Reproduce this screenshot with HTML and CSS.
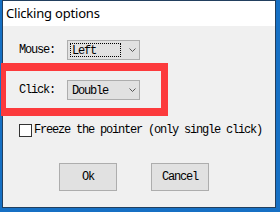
FILE: index.html
```html
<!DOCTYPE html>
<html>
<head>
<meta charset="utf-8">
<link rel="stylesheet" href="styles.css">
</head>
<body>
<div class="window">
  <div class="titlebar">Clicking options</div>
  <div class="client">
    <div class="row row-mouse">
      <span class="label">Mouse:</span>
      <div class="combo">
        <span class="value focus">Left</span>
        <svg class="chev" width="7" height="4" viewBox="0 0 7 4"><path d="M0.5 0.5 L3.5 3.5 L6.5 0.5" fill="none" stroke="#555" stroke-width="1"/></svg>
      </div>
    </div>
    <div class="row row-click">
      <span class="label">Click:</span>
      <div class="combo">
        <span class="value">Double</span>
        <svg class="chev" width="7" height="4" viewBox="0 0 7 4"><path d="M0.5 0.5 L3.5 3.5 L6.5 0.5" fill="none" stroke="#555" stroke-width="1"/></svg>
      </div>
    </div>
    <label class="check-row">
      <span class="checkbox"></span>
      <span class="check-text">Freeze the pointer (only single click)</span>
    </label>
    <div class="buttons">
      <div class="btn">Ok</div>
      <div class="btn">Cancel</div>
    </div>
  </div>
  <div class="highlight"></div>
</div>
</body>
</html>
```
FILE: styles.css
```css
html, body {
  margin: 0;
  padding: 0;
}
body {
  width: 280px;
  height: 212px;
  background: #1670c4;
  overflow: hidden;
}
.window {
  position: relative;
  margin-left: 2px;
  width: 274px;
  height: 208px;
  box-sizing: border-box;
  border: 1px solid #223f5e;
  display: flex;
  flex-direction: column;
}
.titlebar {
  height: 25px;
  flex: none;
  background: #ffffff;
  padding-left: 3px;
  font-family: "Noto Sans", "Liberation Sans", sans-serif;
  font-size: 13px;
  letter-spacing: -0.2px;
  line-height: 25px;
  color: #000;
}
.client {
  flex: 1;
  background: #f0f0f0;
  padding: 14px 0 0 16px;
  font-family: "Liberation Mono", monospace;
  font-size: 12px;
  letter-spacing: -1.2px;
  color: #000;
}
.row {
  display: flex;
  align-items: center;
  height: 20px;
}
.row-click {
  margin-top: 20px;
}
.label {
  width: 48px;
  flex: none;
}
.combo {
  position: relative;
  width: 73px;
  height: 20px;
  box-sizing: border-box;
  border: 1px solid #adadad;
  background: #e1e1e1;
  display: flex;
  align-items: center;
  padding-left: 2px;
}
.value {
  display: block;
  width: 51px;
  height: 14px;
  box-sizing: border-box;
  padding-left: 1px;
  line-height: 14px;
  border: 1px solid transparent;
}
.value.focus {
  border: 1px dotted #000;
}
.chev {
  margin-left: 8px;
}
.check-row {
  display: flex;
  align-items: center;
  margin-top: 24px;
  height: 13px;
}
.checkbox {
  width: 13px;
  height: 13px;
  box-sizing: border-box;
  border: 1px solid #333;
  background: #fff;
  flex: none;
}
.check-text {
  margin-left: 2px;
  line-height: 13px;
}
.buttons {
  display: flex;
  gap: 34px;
  margin-top: 26px;
  padding-left: 40px;
}
.btn {
  width: 58px;
  height: 28px;
  box-sizing: border-box;
  border: 1px solid #adadad;
  background: #e1e1e1;
  display: flex;
  align-items: center;
  justify-content: center;
}
.highlight {
  position: absolute;
  left: -2px;
  top: 62px;
  width: 167px;
  height: 53px;
  box-sizing: border-box;
  border-style: solid;
  border-color: #fc3a3c;
  border-width: 8px 7px 8px 5px;
}
```
